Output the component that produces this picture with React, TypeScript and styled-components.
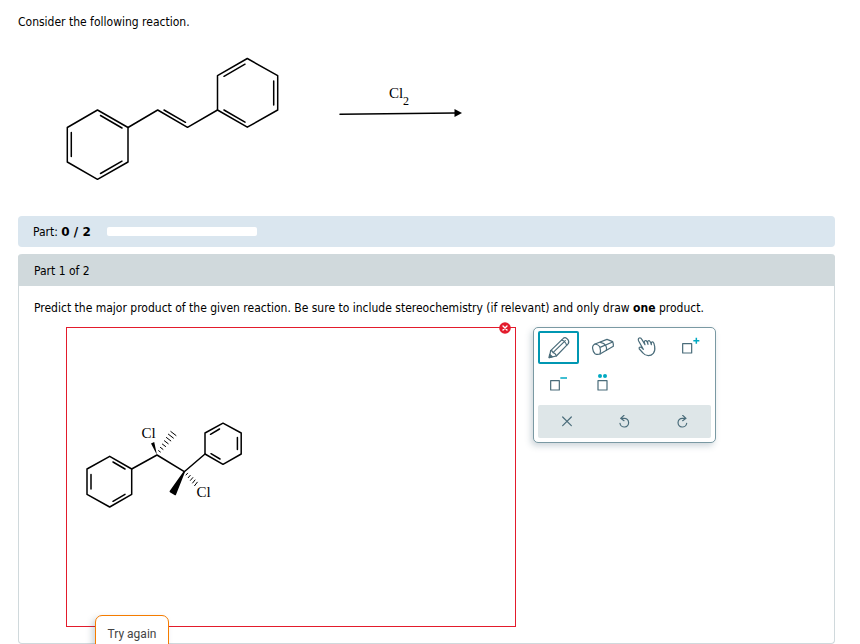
import React from "react";
import styled, { createGlobalStyle } from "styled-components";

const GlobalStyle = createGlobalStyle`
  *, *::before, *::after { box-sizing: border-box; }
  body {
    margin: 0;
    background: #fff;
    color: #000;
    font-family: "DejaVu Sans Condensed", "DejaVu Sans", sans-serif;
    font-size: 12px;
    line-height: 16px;
  }
  p { margin: 0; }
`;

const Page = styled.main`
  display: flex;
  flex-direction: column;
  height: 100vh;
  overflow: hidden;
  padding: 14px 25px 0 18px;
`;

const Reaction = styled.div`
  display: flex;
  align-items: flex-start;
  gap: 56px;
  padding: 24px 0 32px 46px;
`;

const Drawing = styled.svg`
  display: block;
  flex: none;
  fill: none;
  stroke: #000;
  stroke-width: 1.5;
  stroke-linecap: round;
  stroke-linejoin: round;
`;

const AtomLabel = styled.text<{ $sub?: boolean }>`
  fill: #000;
  stroke: none;
  font-family: "Liberation Serif", serif;
  font-size: ${(p) => (p.$sub ? 12 : 15)}px;
`;

const ProgressBar = styled.section`
  display: flex;
  align-items: center;
  gap: 16px;
  flex: none;
  height: 31px;
  padding: 0 15px;
  border-radius: 4px;
  background: #dae6ef;
`;

const Score = styled.strong`
  font-family: "DejaVu Sans", sans-serif;
`;

const Meter = styled.div`
  width: 150px;
  height: 9px;
  border-radius: 2px;
  background: #fff;
`;

const Card = styled.section`
  flex: none;
  margin-top: 7px;
  border: 1px solid #d0d9dc;
  border-top: 0;
  border-radius: 4px;
`;

const CardHeader = styled.h2`
  margin: 0 -1px;
  padding: 9px 16px 7px;
  border-radius: 4px 4px 0 0;
  background: #d0d9dc;
  font-size: 12px;
  font-weight: 400;
`;

const CardBody = styled.div`
  padding: 14px 15px 0;
`;

const Workspace = styled.div`
  display: flex;
  align-items: flex-start;
  gap: 17px;
  padding: 11px 0 16px 32px;
`;

const Canvas = styled.div`
  position: relative;
  flex: none;
  border: 1px solid #e31b2c;
`;

const ErrorBadge = styled.svg`
  position: absolute;
  top: -6px;
  right: 4px;
`;

const TryAgain = styled.button`
  position: absolute;
  left: 28px;
  top: 287px;
  width: 74px;
  height: 38px;
  border: 1px solid #f57c00;
  border-radius: 7px;
  background: #fff;
  box-shadow: -3px 3px 6px rgba(60, 90, 110, 0.25);
  color: #444;
  font-family: Roboto, sans-serif;
  font-size: 12px;
  padding: 0;
`;

const Palette = styled.div`
  width: 183px;
  padding: 3px 4px 4px;
  border: 1px solid #7a99a3;
  border-radius: 5px;
  background: #fff;
  box-shadow: -2px 3px 6px rgba(60, 90, 110, 0.25);
`;

const ToolGrid = styled.div`
  display: grid;
  grid-template-columns: repeat(4, 1fr);
  gap: 3px;
`;

const Tool = styled.button<{ $selected?: boolean }>`
  display: block;
  height: 33px;
  padding: 0;
  border: 0;
  border-radius: 2px;
  background: none;
  box-shadow: ${(p) => (p.$selected ? "inset 0 0 0 2px #0097b2" : "none")};
`;

const ActionBar = styled.div`
  display: grid;
  grid-template-columns: repeat(3, 1fr);
  margin-top: 5px;
  border-radius: 2px;
  background: #dee6e8;
`;

const Action = styled.button`
  display: flex;
  align-items: center;
  justify-content: center;
  height: 33px;
  padding: 0;
  border: 0;
  background: none;
`;

const Glyph = styled.svg`
  display: block;
  fill: none;
  stroke: #4a6c7a;
  stroke-width: 3.6;
  stroke-linecap: round;
  stroke-linejoin: round;
`;

const ToolGlyph = ({ children }: { children: React.ReactNode }) => (
  <Glyph width="41" height="33" viewBox="0 0 123 99" aria-hidden="true">
    {children}
  </Glyph>
);

const ActionGlyph = ({ d }: { d: string }) => (
  <Glyph width="14" height="14" viewBox="0 0 42 42" aria-hidden="true">
    <path d={d} />
  </Glyph>
);

const Stilbene = () => (
  <Drawing width="219" height="130" viewBox="64 54 219 130" role="img" aria-label="Stilbene">
    <path d="M97.5 110L128 127.5V162L97.5 179.3L67.3 162V127.5Z" />
    <path d="M100.5 115.5L122 128M71.3 132.5V156.5M100.5 173.5L122 161.2" />
    <path d="M128 127.5L157.7 110L187.5 127.3L217.5 110M164 110L185.5 122.3" />
    <path d="M247.3 58.5L277.7 75.7V110L247.3 127.2L217.5 110V75.7Z" />
    <path d="M224 76.3L245 64.2M273.7 81V105M224 110L245 122.2" />
  </Drawing>
);

const ReactionArrow = () => (
  <Drawing width="126" height="72" viewBox="339 54 126 72" role="img" aria-label="Reaction arrow, chlorine">
    <AtomLabel x="389" y="98">Cl</AtomLabel>
    <AtomLabel x="403" y="105" $sub>2</AtomLabel>
    <path d="M340 114.2L455 113" />
    <path d="M454.5 109L462 112.9L454.5 117Z" fill="#000" stroke="none" />
  </Drawing>
);

const Product = () => (
  <Drawing width="448" height="298" viewBox="67 328 448 298" role="img" aria-label="Drawn product">
    <path d="M109.7 456.3L131.7 469V494.3L109.7 507L87 494.3V469Z" />
    <path d="M113 462L125 469M91 474.5V489M113 501.3L125 494.3" />
    <path d="M131.7 469L157 455L184.3 471.7L205 454" />
    <path d="M223 423.2L241.2 433V454L223 464.3L205 454V433Z" />
    <path d="M210.5 434.3L219.5 429M237.4 437.5V449.5M211 453.7L220 459" />
    <path d="M157 455L151 443.5L154.2 442Z" fill="#000" stroke="none" />
    <path d="M184.3 471.7L170.3 491.5L175.3 494.5Z" fill="#000" />
    <path
      d="M158.6 450.7L160.4 452M160.4 447.4L163 449.4M162.4 444.1L165.6 446.5M164.4 440.8L168.2 443.7M166.4 437.5L170.8 440.9M168.4 434.2L173.4 438.1M170.8 431.5L176 435.5"
      strokeWidth="1"
    />
    <path
      d="M187.6 473.2L186 475M190.2 475.4L188.2 477.7M192.8 477.6L190.4 480.4M195 480L192.6 483M197.3 482.2L194.6 485.7"
      strokeWidth="1"
    />
    <AtomLabel x="141.5" y="438">Cl</AtomLabel>
    <AtomLabel x="196.5" y="497">Cl</AtomLabel>
  </Drawing>
);

export default function App() {
  return (
    <>
      <GlobalStyle />
      <Page>
        <p>Consider the following reaction.</p>
        <Reaction>
          <Stilbene />
          <ReactionArrow />
        </Reaction>
        <ProgressBar>
          <span>
            Part: <Score>0 / 2</Score>
          </span>
          <Meter role="progressbar" aria-valuemin={0} aria-valuemax={2} aria-valuenow={0} aria-label="Parts completed" />
        </ProgressBar>
        <Card>
          <CardHeader>Part 1 of 2</CardHeader>
          <CardBody>
            <p>
              Predict the major product of the given reaction. Be sure to include stereochemistry (if relevant) and only
              draw <b>one</b> product.
            </p>
            <Workspace>
              <Canvas>
                <Product />
                <ErrorBadge width="12" height="12" viewBox="0 0 12 12" role="img" aria-label="Error">
                  <circle cx="6" cy="6" r="5.8" fill="#e31b2c" />
                  <path d="M4 4L8 8M8 4L4 8" stroke="#fff" strokeWidth="1.4" strokeLinecap="round" />
                </ErrorBadge>
                <TryAgain type="button">Try again</TryAgain>
              </Canvas>
              <Palette role="toolbar" aria-label="Drawing tools">
                <ToolGrid>
                  <Tool type="button" $selected aria-label="Pencil" aria-pressed="true">
                    <ToolGlyph>
                      <path d="M38 59L76 22Q81 18 87 23Q95 30 91 38L55 75L34 80Z" />
                      <path d="M38 59Q43 58 45 65Q52 66 55 75M45 65L82 29M71 27Q82 30 86 43" />
                      <path d="M35 70L43 77L33 80Z" fill="#4a6c7a" />
                    </ToolGlyph>
                  </Tool>
                  <Tool type="button" aria-label="Eraser">
                    <ToolGlyph>
                      <path d="M32 53Q30 44 39 39L75 25L92 32Q95 39 94 46L54 69Q46 72 39 68Q33 63 32 53Z" />
                      <path d="M39 39Q51 41 54 50Q57 60 54 69M54 49L92 33M55 34Q67 36 71 43Q75 51 73 58" />
                    </ToolGlyph>
                  </Tool>
                  <Tool type="button" aria-label="Move">
                    <ToolGlyph>
                      <path d="M52 55L38 30Q35 23 40 21Q45 20 48 26L57 41L55 34Q55 28 60 29Q64 30 66 40L65 34Q65 28 70 29Q74 31 76 41L76 36Q77 31 81 33Q84 35 86 46Q88 60 82 67Q76 74 67 74Q57 74 51 66L40 54Q38 48 43 48Q47 49 52 55Z" />
                    </ToolGlyph>
                  </Tool>
                  <Tool type="button" aria-label="Increase charge">
                    <ToolGlyph>
                      <path d="M38 38H65V66H38Z" />
                      <path d="M79 20V38M70 29H88" stroke="#00a9c2" strokeWidth="4.5" strokeLinecap="butt" />
                    </ToolGlyph>
                  </Tool>
                  <Tool type="button" aria-label="Decrease charge">
                    <ToolGlyph>
                      <path d="M38 41H64V69H38Z" />
                      <path d="M67 33H87" stroke="#00a9c2" strokeWidth="4.5" strokeLinecap="butt" />
                    </ToolGlyph>
                  </Tool>
                  <Tool type="button" aria-label="Lone pair">
                    <ToolGlyph>
                      <path d="M48 41H75V69H48Z" />
                      <g fill="#00a9c2" stroke="none">
                        <circle cx="54" cy="27" r="6" />
                        <circle cx="69" cy="27" r="6" />
                      </g>
                    </ToolGlyph>
                  </Tool>
                </ToolGrid>
                <ActionBar>
                  <Action type="button" aria-label="Clear">
                    <ActionGlyph d="M8 6L34 32M34 6L8 32" />
                  </Action>
                  <Action type="button" aria-label="Undo">
                    <ActionGlyph d="M21 1L11 10L21 17M11 10H22A13 13 0 1 1 9 25" />
                  </Action>
                  <Action type="button" aria-label="Redo">
                    <ActionGlyph d="M23 1L33 10L23 17M33 10H22A13 13 0 1 0 35 25" />
                  </Action>
                </ActionBar>
              </Palette>
            </Workspace>
          </CardBody>
        </Card>
      </Page>
    </>
  );
}
